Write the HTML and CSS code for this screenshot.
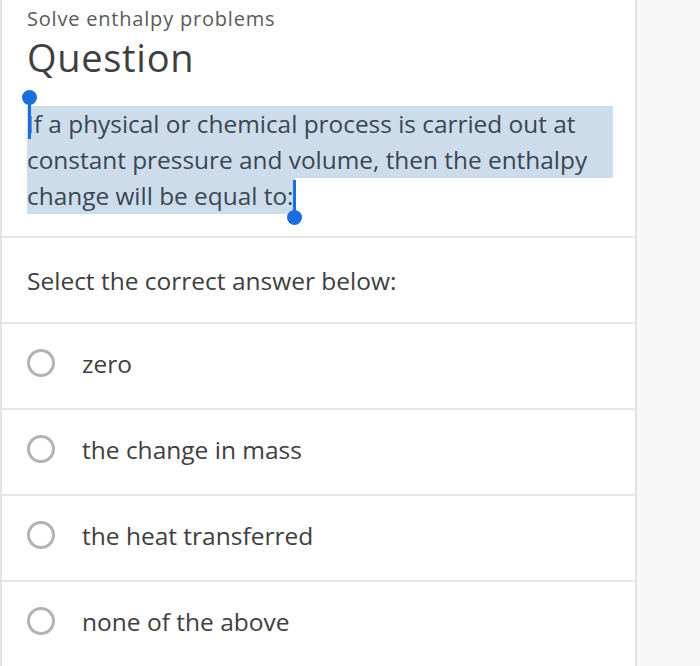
FILE: index.html
```html
<!DOCTYPE html>
<html>
<head>
<meta charset="utf-8">
<link rel="stylesheet" href="styles.css">
</head>
<body>
<div class="card">
  <section class="head">
    <div class="subtitle">Solve enthalpy problems</div>
    <h1 class="title">Question</h1>
    <p class="qtext">
      <span class="ln full">If a physical or chemical process is carried out at</span>
      <span class="ln full">constant pressure and volume, then the enthalpy</span>
      <span class="ln last">change will be equal to:<span class="handle end"><span class="stem"></span><span class="dot"></span></span></span>
      <span class="handle start"><span class="dot"></span><span class="stem"></span></span>
    </p>
  </section>
  <section class="prompt">Select the correct answer below:</section>
  <label class="opt"><span class="radio"></span><span class="otext">zero</span></label>
  <label class="opt"><span class="radio"></span><span class="otext">the change in mass</span></label>
  <label class="opt"><span class="radio"></span><span class="otext">the heat transferred</span></label>
  <label class="opt lastopt"><span class="radio"></span><span class="otext">none of the above</span></label>
</div>
</body>
</html>
```
FILE: styles.css
```css
html, body {
  margin: 0;
  padding: 0;
  background: #f7f7f7;
  font-family: "Open Sans", "Noto Sans", sans-serif;
}
.card {
  width: 633px;
  height: 666px;
  overflow: hidden;
  background: #fff;
  border-left: 2px solid #e4e4e4;
  border-right: 2px solid #e4e4e4;
}
.head {
  padding: 6px 0 22px 25px;
  border-bottom: 2px solid #e6e6e6;
}
.subtitle {
  font-size: 20px;
  line-height: 26px;
  color: #5a5a5a;
  letter-spacing: 0.8px;
}
.title {
  margin: 2px 0 0 0;
  font-size: 38px;
  line-height: 46px;
  font-weight: 400;
  color: #3f3f3f;
  letter-spacing: 0.7px;
}
.qtext {
  position: relative;
  margin: 26px 0 0 0;
  width: 586px;
  font-size: 24.4px;
  line-height: 36px;
  color: #3a4653;
}
.ln {
  background: #cddceb;
  height: 36px;
}
.ln.full {
  display: block;
}
.ln.last {
  position: relative;
  display: inline-block;
  padding-right: 1px;
}
.handle {
  position: absolute;
  display: flex;
  flex-direction: column;
  align-items: center;
  width: 16px;
}
.handle .dot {
  width: 15px;
  height: 15px;
  border-radius: 50%;
  background: #1a6fdc;
}
.handle .stem {
  width: 3px;
  background: #1a6fdc;
}
.handle.start {
  left: -6px;
  top: -16px;
}
.handle.start .stem {
  height: 38px;
  margin-top: -4px;
}
.handle.end {
  right: -8px;
  top: 2px;
}
.handle.end .stem {
  height: 34px;
  margin-bottom: -4px;
}
.prompt {
  height: 84px;
  display: flex;
  align-items: center;
  padding-left: 25px;
  font-size: 24.5px;
  color: #404040;
  border-bottom: 2px solid #e6e6e6;
}
.opt {
  height: 78px;
  padding-bottom: 6px;
  display: flex;
  align-items: center;
  padding-left: 25px;
  border-bottom: 2px solid #e6e6e6;
}
.opt.lastopt {
  border-bottom: none;
}
.radio {
  width: 22px;
  height: 22px;
  border: 3px solid #b3b3b3;
  border-radius: 50%;
  flex: none;
}
.otext {
  margin-left: 27px;
  font-size: 24.5px;
  color: #404040;
}
```
